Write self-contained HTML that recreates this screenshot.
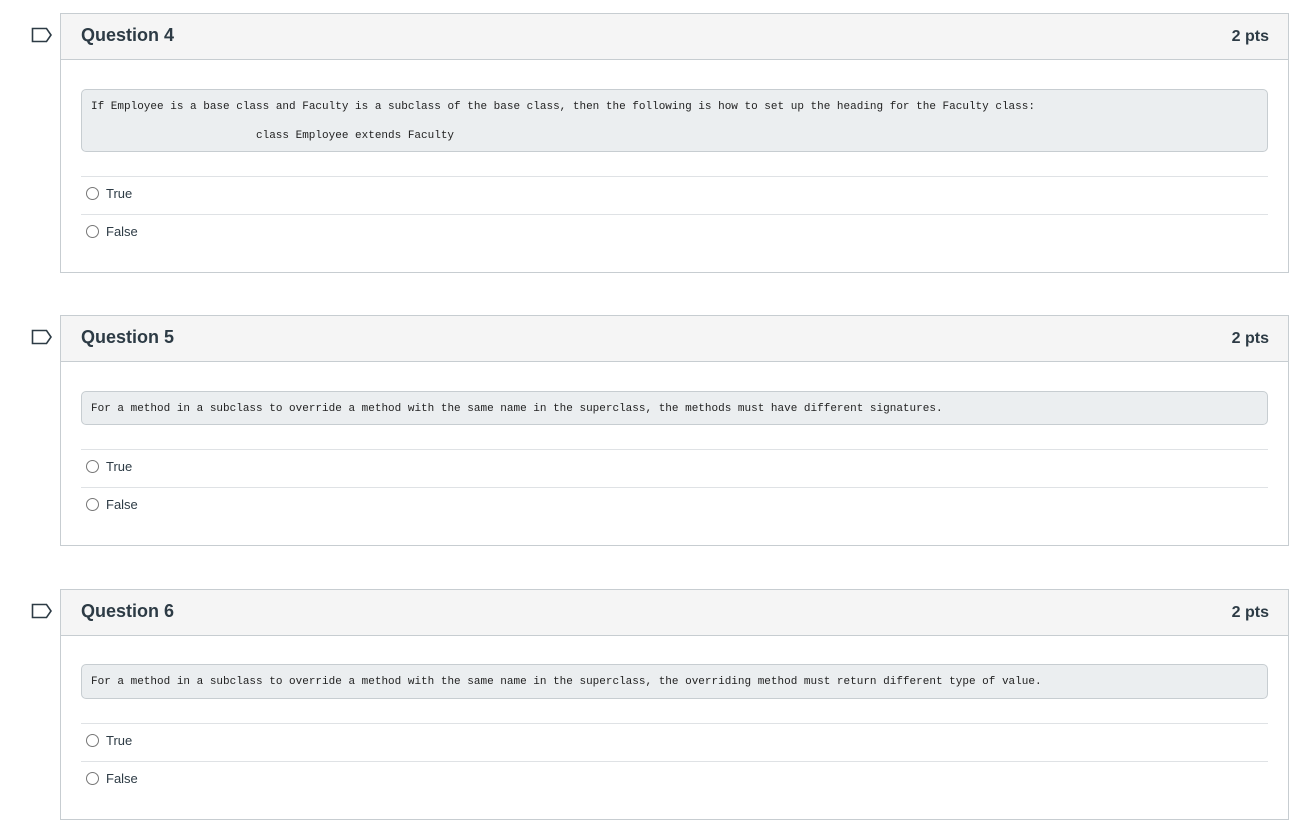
<!DOCTYPE html>
<html><head><meta charset="utf-8"><style>
body{margin:0;background:#fff;font-family:"Liberation Sans",sans-serif;color:#2d3b45;}
.q{position:absolute;left:60px;width:1227px;border:1px solid #c7cdd1;background:#fff;}
.hd{height:45px;background:#f5f5f5;border-bottom:1px solid #c7cdd1;position:relative;}
.hd .t{position:absolute;left:20px;top:11px;font-size:18px;font-weight:bold;color:#2d3b45;}
.hd .p{position:absolute;right:19px;top:14px;font-size:16px;font-weight:bold;color:#2d3b45;}
.code{position:absolute;left:20px;width:1185px;background:#ebeef0;border:1px solid #c7cdd1;border-radius:5px;font-family:"Liberation Mono",monospace;font-size:11px;color:#222;white-space:pre;}
.line{position:absolute;left:20px;width:1187px;height:1px;background:#dfe2e5;}
.opt{position:absolute;left:25px;font-size:13px;color:#2d3b45;}
.opt i{display:inline-block;width:11px;height:11px;border:1px solid #777;border-radius:50%;vertical-align:-2px;margin-right:7px;}
.flag{position:absolute;left:31px;}
</style></head><body>

<svg class="flag" style="top:27px" width="22" height="16"><path d="M1.5 1.5H15.5L20 8L15.5 14.5H1.5Z" fill="none" stroke="#2d3b45" stroke-width="1.6"/></svg>
<div class="q" style="top:13px;height:258px">
 <div class="hd"><span class="t">Question 4</span><span class="p">2 pts</span></div>
 <div class="code" style="top:75px;height:61px"><div style="position:absolute;left:9px;top:11px">If Employee is a base class and Faculty is a subclass of the base class, then the following is how to set up the heading for the Faculty class:</div><div style="position:absolute;left:174px;top:40px">class Employee extends Faculty</div></div>
 <div class="line" style="top:162px"></div>
 <div class="opt" style="top:172px"><i></i>True</div>
 <div class="line" style="top:200px"></div>
 <div class="opt" style="top:210px"><i></i>False</div>
</div>

<svg class="flag" style="top:329px" width="22" height="16"><path d="M1.5 1.5H15.5L20 8L15.5 14.5H1.5Z" fill="none" stroke="#2d3b45" stroke-width="1.6"/></svg>
<div class="q" style="top:315px;height:229px">
 <div class="hd"><span class="t">Question 5</span><span class="p">2 pts</span></div>
 <div class="code" style="top:75px;height:32px"><div style="position:absolute;left:9px;top:11px">For a method in a subclass to override a method with the same name in the superclass, the methods must have different signatures.</div></div>
 <div class="line" style="top:133px"></div>
 <div class="opt" style="top:143px"><i></i>True</div>
 <div class="line" style="top:171px"></div>
 <div class="opt" style="top:181px"><i></i>False</div>
</div>

<svg class="flag" style="top:603px" width="22" height="16"><path d="M1.5 1.5H15.5L20 8L15.5 14.5H1.5Z" fill="none" stroke="#2d3b45" stroke-width="1.6"/></svg>
<div class="q" style="top:589px;height:229px">
 <div class="hd"><span class="t">Question 6</span><span class="p">2 pts</span></div>
 <div class="code" style="top:74px;height:33px"><div style="position:absolute;left:9px;top:11px">For a method in a subclass to override a method with the same name in the superclass, the overriding method must return different type of value.</div></div>
 <div class="line" style="top:133px"></div>
 <div class="opt" style="top:143px"><i></i>True</div>
 <div class="line" style="top:171px"></div>
 <div class="opt" style="top:181px"><i></i>False</div>
</div>
</body></html>
